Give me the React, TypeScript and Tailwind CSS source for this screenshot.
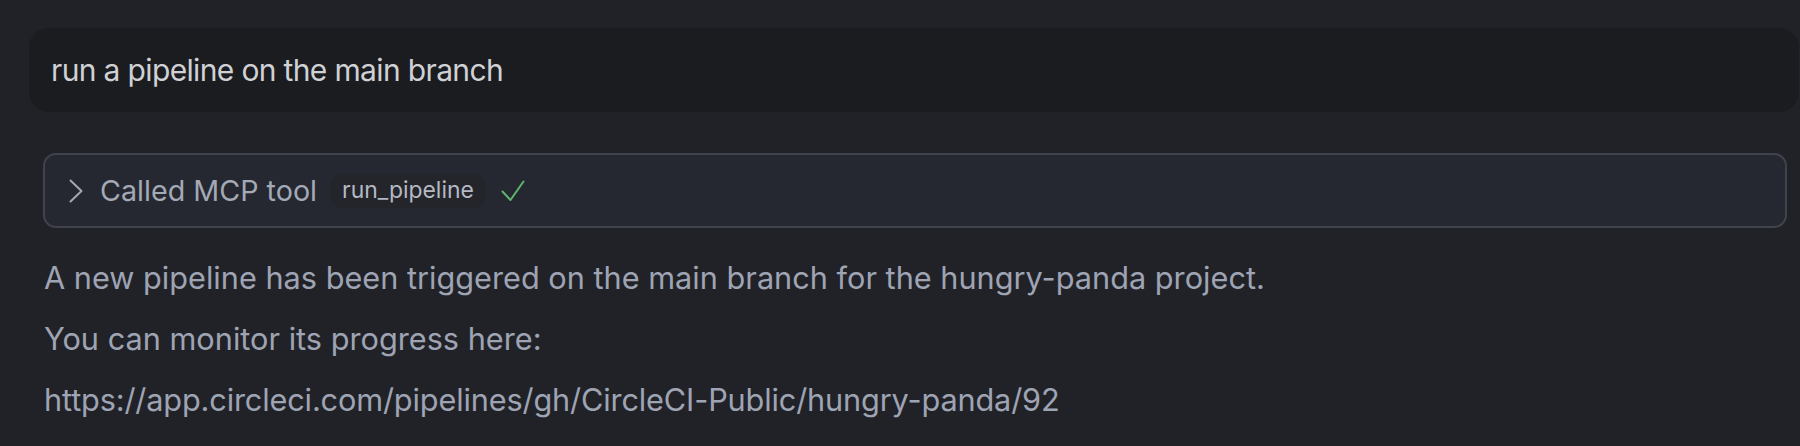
const font = { fontFamily: "Inter, 'Noto Sans', sans-serif" };

function Chevron() {
  return (
    <svg width="14" height="24" viewBox="0 0 14 24" fill="none" className="shrink-0">
      <polyline points="1.5,1.5 12.5,12 1.5,22.5" stroke="#a3a8b5" strokeWidth="2" strokeLinecap="round" strokeLinejoin="round" />
    </svg>
  );
}

function Tick() {
  return (
    <svg width="24" height="22" viewBox="0 0 24 22" fill="none" className="shrink-0">
      <polyline points="1.5,11.5 9.5,20 22.5,1.5" stroke="#5db56e" strokeWidth="2" strokeLinecap="round" strokeLinejoin="round" />
    </svg>
  );
}

export default function App() {
  return (
    <div className="w-full h-[446px] bg-[#212227] overflow-hidden flex flex-col" style={font}>
      {/* user prompt */}
      <div className="mt-[28px] ml-[29px] mr-[1px] h-[84px] shrink-0 rounded-[20px] bg-[#1b1c20] flex items-center pl-[22px]">
        <span className="text-[30px] leading-[36px] tracking-[-0.65px] text-[#d0d1d5]">run a pipeline on the main branch</span>
      </div>

      {/* tool call */}
      <div className="mt-[41px] ml-[43px] mr-[13px] h-[75px] shrink-0 rounded-[13px] border-2 border-[#40434d] bg-[#252830] flex items-center pl-[24px]">
        <Chevron />
        <span className="ml-[17px] text-[28.7px] text-[#a4a9b6]">Called MCP tool</span>
        <span className="ml-[14px] h-[34px] flex items-center px-[11px] rounded-[10px] bg-[#23252b] text-[22.9px] text-[#b5b9c3]">run_pipeline</span>
        <span className="ml-[16px] flex items-center"><Tick /></span>
      </div>

      {/* response */}
      <div className="ml-[44px] mt-[19px] flex flex-col text-[30.7px] leading-[61px] text-[#9ea4b3]">
        <p>A new pipeline has been triggered on the main branch for the hungry-panda project.</p>
        <p>You can monitor its progress here:</p>
        <p className="tracking-[-0.15px]">https://app.circleci.com/pipelines/gh/CircleCI-Public/hungry-panda/92</p>
      </div>
    </div>
  );
}
